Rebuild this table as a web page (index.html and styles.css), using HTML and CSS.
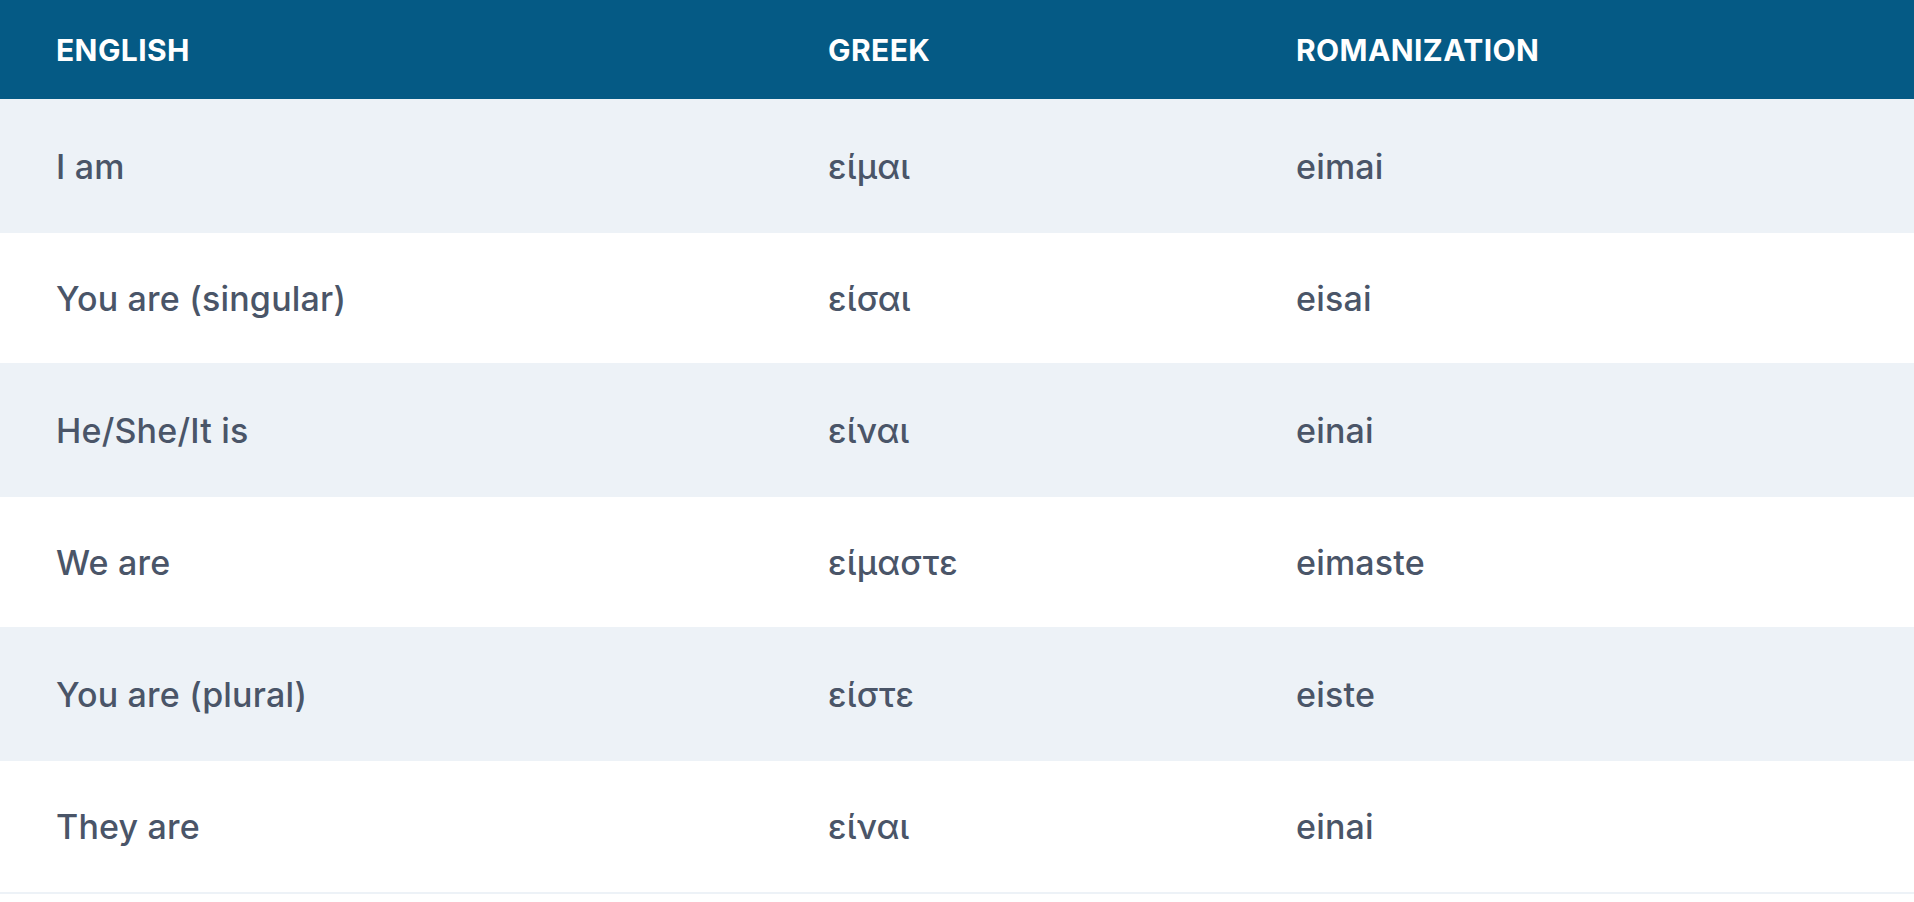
FILE: index.html
```html
<!DOCTYPE html>
<html lang="en">
<head>
<meta charset="utf-8">
<title>Greek verb: to be</title>
<link rel="stylesheet" href="styles.css">
</head>
<body>
<table class="conj">
  <colgroup>
    <col class="c1">
    <col class="c2">
    <col class="c3">
  </colgroup>
  <thead>
    <tr><th>English</th><th>Greek</th><th>Romanization</th></tr>
  </thead>
  <tbody>
    <tr class="odd"><td>I am</td><td lang="el">είμαι</td><td>eimai</td></tr>
    <tr class="even"><td>You are (singular)</td><td lang="el">είσαι</td><td>eisai</td></tr>
    <tr class="odd"><td>He/She/It is</td><td lang="el">είναι</td><td>einai</td></tr>
    <tr class="even"><td>We are</td><td lang="el">είμαστε</td><td>eimaste</td></tr>
    <tr class="odd"><td>You are (plural)</td><td lang="el">είστε</td><td>eiste</td></tr>
    <tr class="even last"><td>They are</td><td lang="el">είναι</td><td>einai</td></tr>
  </tbody>
</table>
</body>
</html>
```

FILE: styles.css
```css
html, body {
  margin: 0;
  padding: 0;
  background: #ffffff;
}

body {
  font-family: Inter, "Noto Sans", "Liberation Sans", sans-serif;
  color: #4a5568;
}

.conj {
  width: 1914px;
  border-collapse: collapse;
  table-layout: fixed;
}

.c1 { width: 772px; }
.c2 { width: 468px; }
.c3 { width: 674px; }

.conj th {
  background: #055a85;
  color: #ffffff;
  font-weight: 700;
  font-size: 30px;
  text-transform: uppercase;
  text-align: left;
  height: 99px;
  padding: 0 0 0 56px;
  letter-spacing: 0.4px;
}

.conj td {
  font-size: 34px;
  font-weight: 500;
  padding: 0 0 0 56px;
  text-align: left;
  white-space: nowrap;
  letter-spacing: 0.2px;
}

.conj tr.odd td {
  background: #edf2f7;
  height: 134px;
}

.conj tr.even td {
  background: #ffffff;
  height: 130px;
}

.conj tr.last td {
  height: 131px;
  border-bottom: 2px solid #edf2f7;
}
```
